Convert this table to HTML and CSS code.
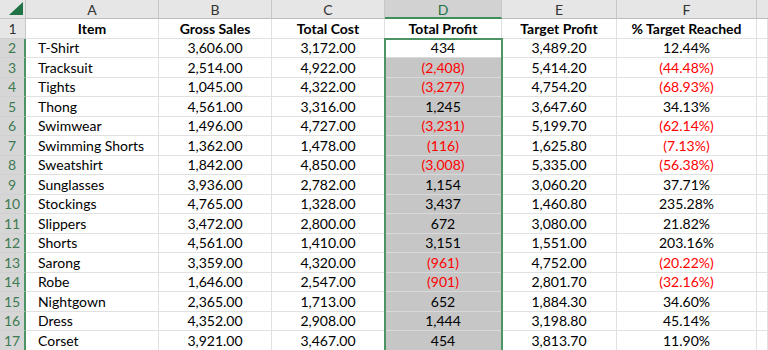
FILE: index.html
```html
<!DOCTYPE html>
<html>
<head>
<meta charset="utf-8">
<link rel="stylesheet" href="styles.css">
</head>
<body>
<div class="sheet">
  <div class="corner"><svg class="tri" width="14" height="13" viewBox="0 0 14 13"><polygon points="0,13 14,13 14,0" fill="#217346"/></svg></div>
  <div class="colh">A</div><div class="colh">B</div><div class="colh">C</div><div class="colh sel">D</div><div class="colh">E</div><div class="colh">F</div><div class="colh last"></div>

  <div class="rowh">1</div><div class="c b">Item</div><div class="c b">Gross Sales</div><div class="c b">Total Cost</div><div class="c b">Total Profit</div><div class="c b">Target Profit</div><div class="c b">% Target Reached</div><div class="c"></div>

  <div class="rowh sel">2</div><div class="c l">T-Shirt</div><div class="c">3,606.00</div><div class="c">3,172.00</div><div class="c d act">434</div><div class="c">3,489.20</div><div class="c">12.44%</div><div class="c"></div>
  <div class="rowh sel">3</div><div class="c l">Tracksuit</div><div class="c">2,514.00</div><div class="c">4,922.00</div><div class="c d neg">(2,408)</div><div class="c">5,414.20</div><div class="c neg">(44.48%)</div><div class="c"></div>
  <div class="rowh sel">4</div><div class="c l">Tights</div><div class="c">1,045.00</div><div class="c">4,322.00</div><div class="c d neg">(3,277)</div><div class="c">4,754.20</div><div class="c neg">(68.93%)</div><div class="c"></div>
  <div class="rowh sel">5</div><div class="c l">Thong</div><div class="c">4,561.00</div><div class="c">3,316.00</div><div class="c d">1,245</div><div class="c">3,647.60</div><div class="c">34.13%</div><div class="c"></div>
  <div class="rowh sel">6</div><div class="c l">Swimwear</div><div class="c">1,496.00</div><div class="c">4,727.00</div><div class="c d neg">(3,231)</div><div class="c">5,199.70</div><div class="c neg">(62.14%)</div><div class="c"></div>
  <div class="rowh sel">7</div><div class="c l">Swimming Shorts</div><div class="c">1,362.00</div><div class="c">1,478.00</div><div class="c d neg">(116)</div><div class="c">1,625.80</div><div class="c neg">(7.13%)</div><div class="c"></div>
  <div class="rowh sel">8</div><div class="c l">Sweatshirt</div><div class="c">1,842.00</div><div class="c">4,850.00</div><div class="c d neg">(3,008)</div><div class="c">5,335.00</div><div class="c neg">(56.38%)</div><div class="c"></div>
  <div class="rowh sel">9</div><div class="c l">Sunglasses</div><div class="c">3,936.00</div><div class="c">2,782.00</div><div class="c d">1,154</div><div class="c">3,060.20</div><div class="c">37.71%</div><div class="c"></div>
  <div class="rowh sel">10</div><div class="c l">Stockings</div><div class="c">4,765.00</div><div class="c">1,328.00</div><div class="c d">3,437</div><div class="c">1,460.80</div><div class="c">235.28%</div><div class="c"></div>
  <div class="rowh sel">11</div><div class="c l">Slippers</div><div class="c">3,472.00</div><div class="c">2,800.00</div><div class="c d">672</div><div class="c">3,080.00</div><div class="c">21.82%</div><div class="c"></div>
  <div class="rowh sel">12</div><div class="c l">Shorts</div><div class="c">4,561.00</div><div class="c">1,410.00</div><div class="c d">3,151</div><div class="c">1,551.00</div><div class="c">203.16%</div><div class="c"></div>
  <div class="rowh sel">13</div><div class="c l">Sarong</div><div class="c">3,359.00</div><div class="c">4,320.00</div><div class="c d neg">(961)</div><div class="c">4,752.00</div><div class="c neg">(20.22%)</div><div class="c"></div>
  <div class="rowh sel">14</div><div class="c l">Robe</div><div class="c">1,646.00</div><div class="c">2,547.00</div><div class="c d neg">(901)</div><div class="c">2,801.70</div><div class="c neg">(32.16%)</div><div class="c"></div>
  <div class="rowh sel">15</div><div class="c l">Nightgown</div><div class="c">2,365.00</div><div class="c">1,713.00</div><div class="c d">652</div><div class="c">1,884.30</div><div class="c">34.60%</div><div class="c"></div>
  <div class="rowh sel">16</div><div class="c l">Dress</div><div class="c">4,352.00</div><div class="c">2,908.00</div><div class="c d">1,444</div><div class="c">3,198.80</div><div class="c">45.14%</div><div class="c"></div>
  <div class="rowh sel">17</div><div class="c l">Corset</div><div class="c">3,921.00</div><div class="c">3,467.00</div><div class="c d">454</div><div class="c">3,813.70</div><div class="c">11.90%</div><div class="c"></div>

  <div class="selbox"></div>
</div>
</body>
</html>
```
FILE: styles.css
```css
html, body {
  margin: 0;
  padding: 0;
  background: #ffffff;
  overflow: hidden;
}
.sheet {
  position: relative;
  display: grid;
  grid-template-columns: 26px 133px 113px 113px 117px 115px 140px 11px;
  grid-template-rows: 19px repeat(17, 19.5px);
  font-family: Lato, "Liberation Sans", sans-serif;
  font-size: 14px;
  color: #000;
  width: 768px;
  height: 350px;
  overflow: hidden;
}
.sheet > div {
  box-sizing: border-box;
  display: flex;
  align-items: center;
  justify-content: center;
  white-space: nowrap;
  overflow: hidden;
}
.corner {
  background: #e6e6e6;
  border-right: 1px solid #c6c6c6;
  border-bottom: 1px solid #c6c6c6;
  position: relative;
}
.tri {
  position: absolute;
  right: 2px;
  bottom: 3px;
}
.colh {
  background: #e6e6e6;
  border-right: 1px solid #c6c6c6;
  border-bottom: 1px solid #bdbdbd;
  color: #333;
  padding-top: 1px;
}
.colh.sel {
  background: #d2d2d2;
  border-bottom: 2px solid #3e8e5a;
  color: #217346;
}
.colh.last {
  border-right: none;
}
.rowh {
  background: #e6e6e6;
  border-bottom: 1px solid #d0d0d0;
  border-right: 1px solid #c6c6c6;
  color: #333;
}
.rowh.sel {
  background: #d6d6d6;
  border-right: 2px solid #4a9563;
  color: #3d7a52;
}
.c {
  border-right: 1px solid #e1e1e1;
  border-bottom: 1px solid #e1e1e1;
}
.c.b {
  font-weight: bold;
}
.c.l {
  justify-content: flex-start !important;
  padding-left: 12px;
}
.c.d {
  background: #c6c6c6;
  border-bottom-color: #d9d9d9;
}
.c.act {
  background: #ffffff;
}
.neg {
  color: #ff0000;
}
.selbox {
  position: absolute;
  left: 384px;
  top: 38px;
  width: 119px;
  height: 330px;
  border: 2px solid #4a9563;
  box-sizing: border-box;
  pointer-events: none;
}
```
